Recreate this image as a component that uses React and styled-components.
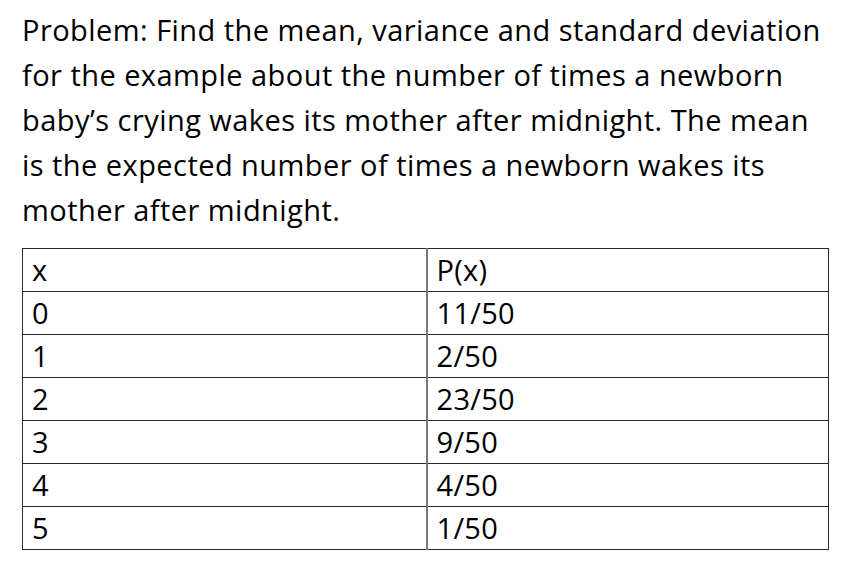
import React from "react";
import styled, { createGlobalStyle } from "styled-components";

const Global = createGlobalStyle`
  html, body { margin: 0; padding: 0; background: #ffffff; }
  body { font-family: "Open Sans", "Noto Sans", sans-serif; color: #000; }
`;

const Page = styled.div`
  width: 847px;
  height: 573px;
  box-sizing: border-box;
  padding: 7px 0 0 22px;
  background: #fff;
`;

const Paragraph = styled.p`
  margin: 0;
  font-size: 29px;
  line-height: 45px;
  letter-spacing: 0.45px;
  width: 820px;
`;

const Table = styled.table`
  margin-top: 16px;
  width: 807px;
  border-collapse: collapse;
  font-size: 29px;
  letter-spacing: 0.3px;
`;

const Cell = styled.td`
  border: 1.5px solid #2a2a2a;
  border-left: ${(p) => (p.$divider ? "2px solid #7a7a7a" : "1.5px solid #2a2a2a")};
  height: 43px;
  padding: 0 0 0 9px;
  box-sizing: border-box;
  vertical-align: middle;
  width: ${(p) => p.$w};
  line-height: 42px;
`;

const rows = [
  ["x", "P(x)"],
  ["0", "11/50"],
  ["1", "2/50"],
  ["2", "23/50"],
  ["3", "9/50"],
  ["4", "4/50"],
  ["5", "1/50"],
];

export default function App() {
  return (
    <Page>
      <Global />
      <Paragraph>
        Problem: Find the mean, variance and standard deviation
        <br />
        for the example about the number of times a newborn
        <br />
        baby’s crying wakes its mother after midnight. The mean
        <br />
        is the expected number of times a newborn wakes its
        <br />
        mother after midnight.
      </Paragraph>
      <Table>
        <tbody>
          {rows.map(([a, b], i) => (
            <tr key={i}>
              <Cell $w="404px">{a}</Cell>
              <Cell $divider>{b}</Cell>
            </tr>
          ))}
        </tbody>
      </Table>
    </Page>
  );
}
